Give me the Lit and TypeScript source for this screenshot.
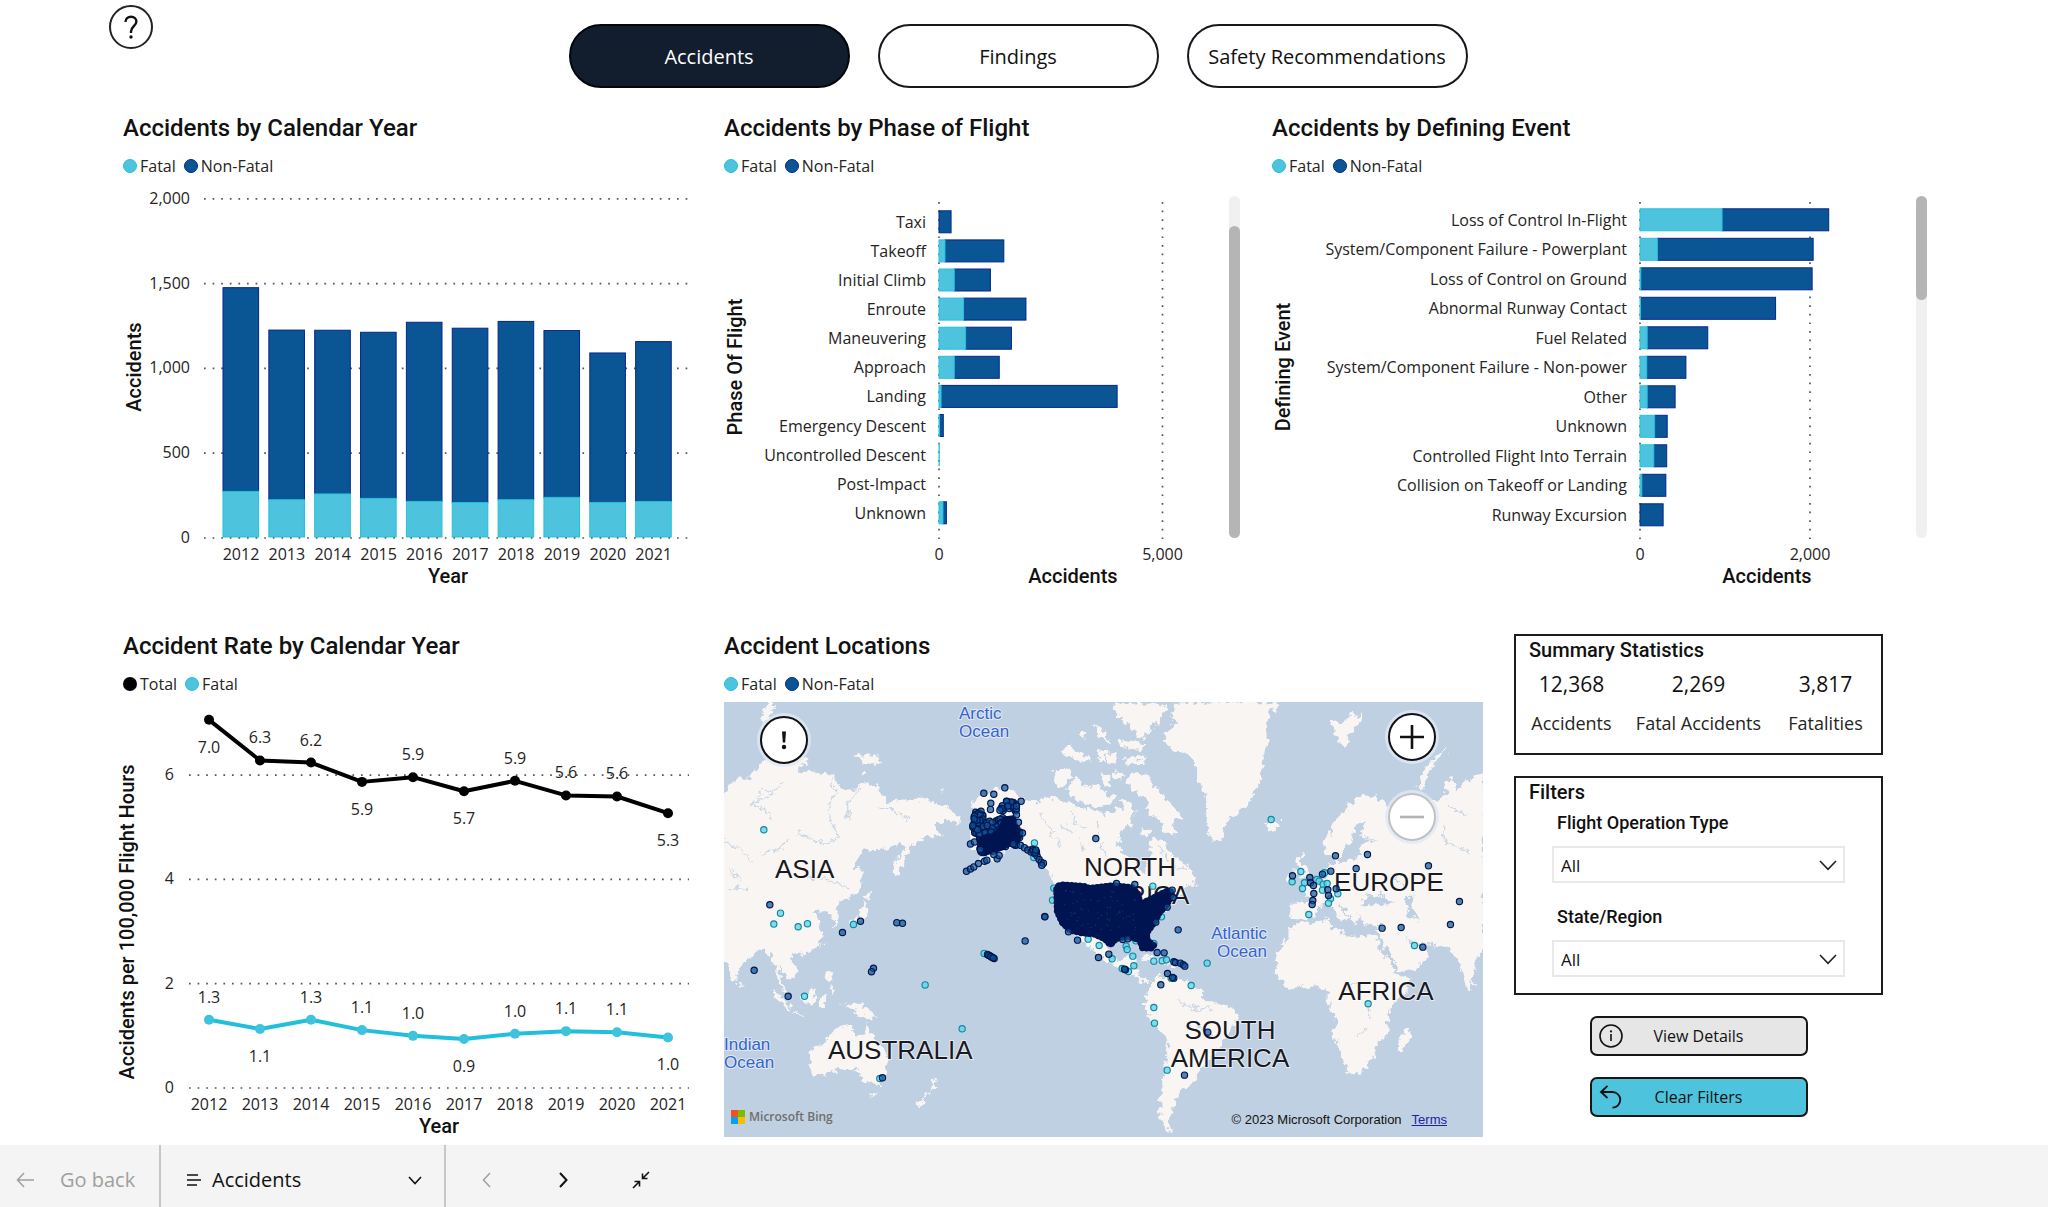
import { LitElement, html, svg, css } from "lit";
import { customElement, property, state } from "lit/decorators.js";
import { classMap } from "lit/directives/class-map.js";

const YEARS = [2012, 2013, 2014, 2015, 2016, 2017, 2018, 2019, 2020, 2021];

const chartStyles = css`
  :host {
    display: block;
  }
  svg {
    display: block;
    width: 100%;
    height: auto;
    overflow: visible;
  }
  .tick {
    font: 16px "Open Sans", "Noto Sans", sans-serif;
    fill: #252423;
  }
  .axis {
    font: 500 20px Roboto, sans-serif;
    fill: #111;
  }
  .end {
    text-anchor: end;
  }
  .mid {
    text-anchor: middle;
  }
  .grid {
    stroke: #555;
    stroke-width: 1.7;
    stroke-dasharray: 1.7 6.9;
  }
  .fatal {
    fill: #4dc3de;
    stroke: #22c1dc;
    stroke-width: 1;
  }
  .nonfatal {
    fill: #0a5694;
    stroke: #04258f;
    stroke-width: 1;
  }
`;

/* ---------- Stacked columns ---------- */

@customElement("column-chart")
export class ColumnChart extends LitElement {
  static styles = chartStyles;

  private totals = [1476, 1226, 1225, 1213, 1272, 1237, 1277, 1223, 1091, 1158];
  private fatals = [275, 226, 260, 234, 216, 209, 226, 240, 210, 215];

  render() {
    const y = (v: number) => 354 - v * 0.1696;
    const x = (i: number) => 100 + i * 45.85;
    return html`<svg viewBox="0 0 601 408" role="img" aria-label="Accidents by calendar year">
      ${[2000, 1500, 1000, 500].map(
        (t) => svg`<line class="grid" x1="81" x2="565" y1=${y(t)} y2=${y(t)} />`
      )}
      ${[2000, 1500, 1000, 500, 0].map(
        (t) => svg`<text class="tick end" x="67" y=${y(t) + 5}>${t.toLocaleString("en-US")}</text>`
      )}
      ${YEARS.map(
        (year, i) => svg`
          <rect class="nonfatal" x=${x(i)} width="35.6" y=${y(this.totals[i])}
            height=${y(this.fatals[i]) - y(this.totals[i])} />
          <rect class="fatal" x=${x(i)} width="35.6" y=${y(this.fatals[i])}
            height=${y(0) - y(this.fatals[i]) - 1} />
          <text class="tick mid" x=${x(i) + 18} y="376">${year}</text>`
      )}
      <line class="grid" x1="81" x2="565" y1=${y(0)} y2=${y(0)} />
      <text class="axis mid" x="325" y="399">Year</text>
      <text class="axis mid" transform="translate(18 183) rotate(-90)">Accidents</text>
    </svg>`;
  }
}

/* ---------- Stacked horizontal bars ---------- */

interface Bar {
  label: string;
  fatal: number;
  total: number;
}

interface BarLayout {
  width: number;
  zero: number;
  scale: number;
  max: number;
  top: number;
  pitch: number;
  titleX: number;
  barX: number;
  thumbTop: number;
  thumbHeight: number;
}

@customElement("bar-chart")
export class BarChart extends LitElement {
  static styles = [
    chartStyles,
    css`
      .track {
        fill: #f0f0f0;
      }
      .thumb {
        fill: #b5b5b5;
      }
    `,
  ];

  @property({ attribute: false }) bars: Bar[] = [];
  @property({ attribute: false }) layout!: BarLayout;
  @property() heading = "";

  render() {
    const l = this.layout;
    const x = (v: number) => l.zero + v * l.scale;
    return html`<svg viewBox="0 0 ${l.width} 408" role="img" aria-label=${this.heading}>
      ${[0, l.max].map(
        (t) => svg`
          <line class="grid" x1=${x(t)} x2=${x(t)} y1="18" y2="355" />
          <text class="tick mid" x=${x(t)} y="376">${t.toLocaleString("en-US")}</text>`
      )}
      ${this.bars.map((b, i) => {
        const y = l.top + i * l.pitch;
        return svg`
          <text class="tick end" x=${l.zero - 13} y=${y + 17}>${b.label}</text>
          ${b.total > b.fatal
            ? svg`<rect class="nonfatal" x=${x(b.fatal)} y=${y} height="22" width=${x(b.total) - x(b.fatal)} />`
            : ""}
          ${b.fatal > 0
            ? svg`<rect class="fatal" x=${x(0)} y=${y} height="22" width=${x(b.fatal) - x(0)} />`
            : ""}`;
      })}
      <text class="axis mid" x=${l.titleX} y="399">Accidents</text>
      <text class="axis mid" transform="translate(18 183) rotate(-90)">${this.heading}</text>
      <rect class="track" x=${l.barX} y="12" width="11" height="342" rx="5.5" />
      <rect class="thumb" x=${l.barX} y=${l.thumbTop} width="11" height=${l.thumbHeight} rx="5.5" />
    </svg>`;
  }
}

/* ---------- Rate lines ---------- */

@customElement("rate-chart")
export class RateChart extends LitElement {
  static styles = [
    chartStyles,
    css`
      polyline {
        fill: none;
        stroke-width: 4;
        stroke-linejoin: round;
      }
      .total-line {
        stroke: #000;
      }
      .fatal-line {
        stroke: #22bfdc;
      }
      .fatal-dot {
        fill: #3dc3de;
      }
    `,
  ];

  private total = [7.06, 6.28, 6.24, 5.87, 5.96, 5.69, 5.89, 5.61, 5.59, 5.27];
  private totalText = ["7.0", "6.3", "6.2", "5.9", "5.9", "5.7", "5.9", "5.6", "5.6", "5.3"];
  private totalBelow = [0, 3, 5, 9];
  private fatal = [1.31, 1.13, 1.31, 1.11, 1.0, 0.94, 1.04, 1.09, 1.07, 0.97];
  private fatalText = ["1.3", "1.1", "1.3", "1.1", "1.0", "0.9", "1.0", "1.1", "1.1", "1.0"];
  private fatalBelow = [1, 5, 9];

  render() {
    const y = (v: number) => 386 - v * 52.15;
    const x = (i: number) => 86 + i * 51;
    const line = (vals: number[]) => vals.map((v, i) => `${x(i)},${y(v)}`).join(" ");
    const labels = (vals: number[], text: string[], below: number[]) =>
      vals.map(
        (v, i) =>
          svg`<text class="tick mid" x=${x(i)} y=${y(v) + (below.includes(i) ? 33 : -17)}>${text[i]}</text>`
      );
    return html`<svg viewBox="0 0 601 435" role="img" aria-label="Accident rate by calendar year">
      ${[6, 4, 2, 0].map(
        (t) => svg`
          <line class="grid" x1="66" x2="566" y1=${y(t)} y2=${y(t)} />
          <text class="tick end" x="51" y=${y(t) + 5}>${t}</text>`
      )}
      <polyline class="total-line" points=${line(this.total)} />
      ${this.total.map((v, i) => svg`<circle cx=${x(i)} cy=${y(v)} r="5" />`)}
      <polyline class="fatal-line" points=${line(this.fatal)} />
      ${this.fatal.map((v, i) => svg`<circle class="fatal-dot" cx=${x(i)} cy=${y(v)} r="5" />`)}
      ${labels(this.total, this.totalText, this.totalBelow)}
      ${labels(this.fatal, this.fatalText, this.fatalBelow)}
      ${YEARS.map((year, i) => svg`<text class="tick mid" x=${x(i)} y="408">${year}</text>`)}
      <text class="axis mid" x="316" y="431">Year</text>
      <text class="axis mid" transform="translate(11 220) rotate(-90)">Accidents per 100,000 Flight Hours</text>
    </svg>`;
  }
}

/* ---------- Map ---------- */

type Pt = [number, number];

/* Each tile keeps its own drawing grid, three units to a map pixel. */
const WEST = "translate(-3.5 -82.5) scale(0.3333 0.338)";
const EAST = "translate(376.5 -12.5) scale(0.3333)";
const NORTH = "translate(296.5 -2.5) scale(0.3333)";
const CARIB = "translate(316.5 167.5) scale(0.3333)";

const WEST_LAND = [
  "M0 520L30 490L60 470L90 465L110 435L130 415L165 405L200 398L250 400L262 420L230 440L240 455L280 450L320 455L345 470L365 500L400 505L425 480L450 485L480 505L500 540L540 535L570 530L610 530L650 545L680 555L720 585L715 605L690 590L665 600L640 610L660 635L620 640L600 655L575 665L562 690L550 720L535 750L520 760L520 735L530 710L555 680L545 658L500 678L430 680L410 710L395 740L418 735L425 760L420 790L385 825L360 835L350 850L355 875L345 895L328 875L310 860L288 862L275 870L305 885L296 905L308 935L295 965L265 985L240 990L225 985L213 1000L232 1035L225 1055L205 1065L190 1040L175 1030L180 1070L200 1108L185 1100L172 1070L165 1030L150 1000L130 970L105 985L75 1010L55 1035L45 1080L35 1070L20 1020L0 1005Z",
  "M153 1095L175 1105L212 1150L208 1162L182 1138Z",
  "M215 1163L255 1167L250 1172L218 1170Z",
  "M238 1110L262 1108L275 1085L288 1105L276 1142L248 1140Z",
  "M298 1115L325 1110L310 1125L318 1150L302 1150Z",
  "M318 1042L334 1048L330 1072L320 1062ZM330 1085L345 1095L335 1108Z",
  "M365 1140L402 1136L440 1148L472 1182L440 1176L408 1172L395 1152Z",
  "M428 818L455 802L446 828ZM434 832L442 868L425 895L388 900L418 868Z",
  "M336 890L352 900L343 912ZM302 955L309 958L303 972ZM55 1070L66 1078L60 1088Z",
  "M262 1280L275 1265L310 1255L330 1230L355 1208L375 1198L398 1205L398 1222L425 1236L437 1192L450 1215L460 1240L485 1258L502 1300L496 1340L475 1374L450 1372L425 1360L415 1338L385 1325L340 1335L312 1347L275 1348Z",
  "M452 1398L470 1400L460 1414Z",
  "M638 1365L652 1380L634 1396ZM628 1400L606 1435L590 1442L588 1430Z",
  "M135 250L160 250L160 270L145 290L128 320L122 300Z",
  "M404 405L435 400L470 405L486 425L440 428ZM658 508L676 498L672 512ZM425 450L440 455L430 462Z",
  "M745 550L790 518L853 495L910 530L960 540L1000 528L1100 560L1100 800L1000 780L975 730L930 680L880 662L830 708L790 722L738 752L745 740L790 695L750 670L748 630L760 600L775 570Z",
];

const NORTH_LAND = [
  "M-20 320L30 320L70 292L110 300L150 315L210 330L255 345L290 322L330 340L335 375L300 400L287 440L310 465L345 485L368 520L385 490L388 430L405 408L440 440L460 470L490 490L520 520L528 550L500 556L480 590L440 620L420 660L130 660L98 560L100 535L70 500L40 450L-20 400Z",
  "M103 212L140 205L158 232L125 262L100 250Z",
  "M165 235L205 262L240 262L260 290L290 290L270 318L215 320L165 300L140 270Z",
  "M330 222L385 222L395 255L430 290L465 325L485 350L455 370L465 408L430 395L410 350L385 345L380 300L345 280L320 250Z",
  "M280 12L410 12L440 22L410 65L380 110L350 120L345 90L310 70L285 40Z",
  "M300 120L340 125L375 135L360 150L310 150ZM310 175L375 172L375 195L320 195Z",
  "M120 155L150 130L160 150L190 165L215 190L170 185L150 170ZM215 75L250 85L265 130L235 110ZM170 105L200 95L190 125Z",
  "M225 155L260 150L255 180L235 178ZM260 165L290 160L285 195L265 190ZM240 215L270 225L268 265L245 250ZM280 215L308 220L300 250L282 240Z",
  "M300 300L335 310L345 345L315 340ZM360 385L395 395L380 408L360 402Z",
  "M500 8L775 8L745 50L735 90L745 130L728 190L722 240L690 302L650 345L615 365L607 415L590 424L568 415L555 370L562 300L528 240L522 190L492 160L450 155L428 105L470 75L450 40L475 8Z",
  "M733 375L775 365L778 380L748 394Z",
];

const CARIB_LAND = [
  "M100 190L140 230L172 258L215 283L250 308L285 320L302 342L330 338L325 330L300 325L292 300L280 290L283 262L260 258L242 276L215 265L205 235L215 200Z",
  "M300 262L335 262L370 272L365 280L310 270ZM378 280L410 282L405 292L380 288Z",
];

const EAST_LAND = [
  "M165 865L150 890L140 920L133 950L150 990L185 1030L200 1052L200 1110L190 1170L180 1230L180 1290L195 1322L216 1332L202 1308L212 1280L222 1240L240 1205L272 1190L280 1165L310 1130L350 1080L380 1035L412 985L405 962L350 940L315 930L298 900L270 880L230 868L215 858L190 862Z",
  "M570 715L620 700L685 690L690 712L740 738L800 740L825 742L850 790L885 848L930 868L920 905L870 950L862 1000L870 1030L835 1060L822 1100L790 1145L745 1153L725 1110L700 1040L710 990L685 950L680 905L640 885L570 900L530 860L523 820L535 780L570 735Z",
  "M925 1012L932 1040L905 1088L892 1080L895 1045Z",
  "M668 465L700 400L740 350L790 316L840 330L865 350L860 375L890 380L940 350L1000 335L1040 318L1035 285L1055 262L1070 300L1100 270L1150 246L1150 780L1125 820L1105 905L1090 880L1075 810L1050 782L1000 766L968 770L985 800L950 835L895 850L870 800L840 745L830 722L850 705L800 708L780 690L770 672L775 700L755 700L735 660L705 640L745 685L725 695L690 645L655 650L640 675L620 692L570 688L570 640L622 640L625 622L600 602L640 580L680 555L688 520L700 530L710 500L690 495L675 500Z",
  "M598 488L606 490L604 520L628 562L598 572L602 545L588 520ZM562 548L588 540L585 568L562 572Z",
  "M688 90L740 100L735 80L785 72L788 92L765 108L730 172L710 150Z",
  "M1045 178L1015 205L990 235L968 300L955 298L965 255L990 215L1035 178Z",
  "M1112 870L1124 885L1116 892Z",
];

const EAST_WATER = [
  "M738 470L762 440L765 405L790 395L782 445L825 450L785 462L775 500L755 515L715 520L725 490Z",
  "M782 642L800 615L830 625L842 612L880 640L830 652Z",
  "M908 620L942 618L935 650L958 690L925 682L920 650Z",
  "M915 740L945 765L985 768L965 782L935 765Z",
  "M868 380L900 385L895 412L865 395Z",
];

const WEST_RIVERS =
  "M110 540L125 500L150 510M330 470L345 510L325 560L330 600L360 640L310 665L270 650L230 630M10 655L60 680L90 720M420 500L380 540L385 590M470 560L520 560L560 590M120 690L180 680L200 650M190 480L150 520L95 545L130 560L155 585M20 800L80 795M30 740L60 770M260 760L320 770L390 795";
const EAST_RIVERS =
  "M1030 410L1030 450L1060 470L1110 490M840 790L835 760M800 960L815 985M770 1040L800 1020M880 560L920 600M740 900L780 880M340 1040L300 1010L260 1020M230 930L280 960L330 955M1040 345L1100 380";
const NORTH_RIVERS =
  "M150 330L165 370L200 390M180 420L190 460M230 360L235 400M120 380L170 400M240 430L260 470M60 340L90 390L120 440M430 470L460 500L500 510M410 440L430 460";

const WEST_FATAL: Pt[] = [[130, 622], [180, 869], [160, 901], [233, 909], [261, 900], [399, 902], [252, 1115], [614, 1081], [725, 1211], [942, 661], [940, 704], [791, 988], [478, 1358]];
const WEST_NON: Pt[] = [[148, 844], [101, 1038], [203, 1115], [366, 926], [420, 893], [529, 897], [546, 899], [459, 1032], [453, 1042], [914, 951], [973, 879], [1126, 648], [801, 991], [808, 995], [814, 999], [821, 1003], [804, 993], [811, 997], [818, 1001], [486, 1356],
  [853, 498], [790, 514], [820, 517], [811, 544], [810, 562], [902, 538], [888, 552], [872, 540], [858, 538], [888, 578], [862, 552], [761, 590], [757, 610], [750, 664], [762, 658], [738, 745], [750, 738], [760, 732], [774, 722], [792, 715], [799, 712], [894, 600], [906, 632], [900, 668], [912, 675], [922, 682], [932, 688], [942, 692], [950, 700], [956, 710], [962, 718], [969, 721], [964, 727], [948, 688], [936, 680], [938, 684], [944, 690], [946, 682], [878, 664], [830, 708], [836, 698], [820, 695], [780, 680]];
const CARIB_FATAL: Pt[] = [[40, 56], [36, 92], [337, 50], [363, 142], [143, 209], [176, 228], [215, 268], [257, 230], [260, 240], [286, 214], [277, 260], [280, 289], [245, 297], [264, 306], [340, 275], [365, 274], [378, 271], [340, 222], [392, 326], [500, 281], [452, 348], [340, 414], [342, 461]];
const CARIB_NON: Pt[] = [[13, 142], [84, 187], [111, 212], [174, 264], [205, 254], [228, 42], [283, 45], [413, 181], [255, 301], [252, 299], [350, 249], [371, 250], [400, 277], [405, 279], [420, 281], [428, 286], [433, 290], [381, 312], [400, 326], [396, 324], [361, 346], [502, 488], [395, 62], [398, 84], [380, 113], [346, 158], [247, 210], [262, 208]];
const EAST_FATAL: Pt[] = [[512, 390], [601, 546], [575, 577], [612, 580], [606, 597], [649, 570], [656, 575], [668, 584], [680, 582], [666, 602], [712, 613], [690, 628], [684, 641], [625, 675], [942, 768], [803, 943], [200, 1142], [672, 550]];
const EAST_NON: Pt[] = [[705, 499], [801, 495], [767, 537], [984, 529], [691, 545], [666, 554], [576, 559], [628, 564], [630, 580], [639, 588], [640, 612], [637, 633], [635, 645], [682, 601], [684, 618], [707, 598], [1077, 636], [1050, 705], [845, 716], [902, 714], [967, 773], [252, 1157]];

const US_SHAPE =
  "M48 60Q50 48 62 46L130 50L148 56L220 48L275 54L292 72L300 104L340 84L375 66L392 66L394 80L376 110L358 128L342 158L318 192L322 214L340 228L334 236L306 236L298 212L262 200L226 208L210 226L192 208L160 194L120 190L88 182L64 158L50 126Z";

const ALASKA_CORE =
  "M852 590L880 586L886 615L898 640L892 656L868 662L846 676L822 684L800 690L786 676L778 655L800 640L815 640L838 625L845 608Z";

function random(seed: number) {
  return () => {
    seed = (seed * 16807) % 2147483647;
    return seed / 2147483647;
  };
}

function alaska(): Pt[] {
  const rnd = random(77);
  const clusters = [
    [850, 630, 46, 44, 90], [790, 670, 18, 20, 26], [815, 655, 45, 32, 50],
    [775, 585, 16, 20, 18], [770, 615, 16, 26, 18], [865, 556, 30, 18, 18], [800, 618, 40, 26, 18], [890, 640, 16, 30, 20],
  ];
  const out: Pt[] = [];
  for (const [cx, cy, rx, ry, n] of clusters) {
    for (let i = 0; i < n; i++) {
      const a = rnd() * Math.PI * 2;
      const r = Math.sqrt(rnd());
      out.push([cx + Math.cos(a) * rx * r, cy + Math.sin(a) * ry * r]);
    }
  }
  return out;
}

function specks(): Pt[] {
  const rnd = random(991);
  return Array.from({ length: 60 }, () => [70 + rnd() * 220, 62 + rnd() * 120] as Pt);
}

@customElement("accident-map")
export class AccidentMap extends LitElement {
  static styles = css`
    :host {
      display: block;
      position: relative;
    }
    .world {
      display: block;
      width: 100%;
      height: auto;
      background: #bfd0e2;
    }
    .land {
      fill: #f8f5f2;
    }
    .water {
      fill: #bfd0e2;
    }
    .river {
      fill: none;
      stroke: #c8d6e5;
      stroke-width: 4;
    }
    .non {
      fill: #0a5694;
      fill-opacity: 0.7;
      stroke: #001450;
      stroke-width: 3.4;
    }
    .fat {
      fill: #63d6e8;
      fill-opacity: 0.8;
      stroke: #1087a2;
      stroke-width: 3.4;
    }
    .mass {
      fill: #001452;
      stroke: #001452;
      stroke-width: 20;
      stroke-linecap: round;
      stroke-dasharray: 0.1 13;
    }
    .mass-core {
      fill: #001452;
      stroke: #001452;
      stroke-width: 14;
      stroke-linejoin: round;
    }
    .speck {
      fill: #0b3a7c;
    }
    .continent {
      font: 26px "Liberation Sans", Arial, sans-serif;
      fill: #191922;
      stroke: #ffffff;
      stroke-opacity: 0.6;
      stroke-width: 2;
      paint-order: stroke;
    }
    .ocean {
      font: 17px "Liberation Sans", Arial, sans-serif;
      fill: #3463cc;
      stroke: #dfe8f3;
      stroke-width: 2;
      paint-order: stroke;
    }
    .mid {
      text-anchor: middle;
    }
    .end {
      text-anchor: end;
    }
    .round {
      position: absolute;
      display: grid;
      place-items: center;
      width: 48px;
      height: 48px;
      padding: 0;
      border: 2px solid #111;
      border-radius: 50%;
      background: #fff;
      box-shadow: 0 0 0 3px rgba(222, 233, 246, 0.8);
      color: #111;
    }
    .round.notice {
      top: 14px;
      left: 36px;
    }
    .round.zoom-in {
      top: 11px;
      right: 47px;
    }
    .round.zoom-out {
      top: 91px;
      right: 47px;
      border-color: #c1c1c1;
      color: #b3b3b3;
    }
    .bing {
      position: absolute;
      left: 7px;
      bottom: 11px;
      display: flex;
      align-items: center;
      gap: 4px;
      font: 600 12px/18px "Open Sans", sans-serif;
      color: #706e6c;
    }
    .credit {
      position: absolute;
      right: 36px;
      bottom: 8px;
      display: flex;
      gap: 10px;
      font: 13px/18px "Liberation Sans", Arial, sans-serif;
      color: #111;
    }
    .credit a {
      color: #1c22a4;
    }
  `;

  private dots(points: Pt[], cls: string) {
    return points.map(([x, y]) => svg`<circle class=${cls} cx=${x} cy=${y} r="9.4" />`);
  }

  private land(paths: string[], tile: string) {
    return svg`<g transform=${tile}>${paths.map((d) => svg`<path class="land" d=${d} />`)}</g>`;
  }

  render() {
    return html`
      <svg class="world" viewBox="0 0 759 435" role="img" aria-label="World map of accident locations">
        <defs>
          <filter id="coast" x="0" y="0" width="100%" height="100%">
            <feTurbulence type="fractalNoise" baseFrequency="0.16" numOctaves="3" seed="4" />
            <feDisplacementMap in="SourceGraphic" scale="11" xChannelSelector="R" yChannelSelector="G" />
          </filter>
        </defs>
        <g filter="url(#coast)">
          <rect class="water" width="759" height="435" />
          ${this.land(WEST_LAND, WEST)} ${this.land(NORTH_LAND, NORTH)}
          ${this.land(CARIB_LAND, CARIB)} ${this.land(EAST_LAND, EAST)}
          <g transform=${EAST}>${EAST_WATER.map((d) => svg`<path class="water" d=${d} />`)}
            <path class="river" d=${EAST_RIVERS} /></g>
          <g transform=${WEST}><path class="river" d=${WEST_RIVERS} /></g>
          <g transform=${NORTH}><path class="river" d=${NORTH_RIVERS} /></g>
        </g>
        <text class="ocean" x="235" y="17">Arctic</text>
        <text class="ocean" x="235" y="35">Ocean</text>
        <text class="ocean" x="0" y="348">Indian</text>
        <text class="ocean" x="0" y="366">Ocean</text>
        <text class="ocean end" x="543" y="237">Atlantic</text>
        <text class="ocean end" x="543" y="255">Ocean</text>
        <text class="continent" x="51" y="176">ASIA</text>
        <text class="continent" x="104" y="357">AUSTRALIA</text>
        <text class="continent mid" x="406" y="174">NORTH</text>
        <text class="continent mid" x="406" y="202">AMERICA</text>
        <text class="continent mid" x="665" y="189">EUROPE</text>
        <text class="continent mid" x="662" y="298">AFRICA</text>
        <text class="continent mid" x="506" y="337">SOUTH</text>
        <text class="continent mid" x="506" y="365">AMERICA</text>
        <g transform=${WEST}>
          ${this.dots(WEST_FATAL, "fat")} ${this.dots(alaska(), "non")}
          <path class="mass-core" d=${ALASKA_CORE} />
          ${this.dots(WEST_NON, "non")}
        </g>
        <g transform=${CARIB}>
          ${this.dots(CARIB_FATAL, "fat")}
          <path class="mass-core" d=${US_SHAPE} />
          <path class="mass" d=${US_SHAPE} />
          ${specks().map(([x, y]) => svg`<circle class="speck" cx=${x} cy=${y} r="2" />`)}
          ${this.dots(CARIB_NON, "non")}
        </g>
        <g transform=${EAST}>${this.dots(EAST_FATAL, "fat")} ${this.dots(EAST_NON, "non")}</g>
      </svg>
      <button class="round notice" aria-label="Notice">
        <svg width="24" height="24" viewBox="0 0 24 24">
          <path d="M10 3.5h4l-.8 11h-2.4z" fill="currentColor" /><circle cx="12" cy="19" r="2.2" fill="currentColor" />
        </svg>
      </button>
      <button class="round zoom-in" aria-label="Zoom in">
        <svg width="26" height="26" viewBox="0 0 26 26">
          <path d="M13 1v24M1 13h24" fill="none" stroke="currentColor" stroke-width="2.6" />
        </svg>
      </button>
      <button class="round zoom-out" aria-label="Zoom out">
        <svg width="26" height="26" viewBox="0 0 26 26">
          <path d="M1 13h24" fill="none" stroke="currentColor" stroke-width="2.6" />
        </svg>
      </button>
      <span class="bing">
        <svg width="14" height="14" viewBox="0 0 14 14">
          <path fill="#f25022" d="M0 0h7v7H0z" /><path fill="#7fba00" d="M7 0h7v7H7z" />
          <path fill="#00a4ef" d="M0 7h7v7H0z" /><path fill="#ffb900" d="M7 7h7v7H7z" />
        </svg>
        Microsoft Bing
      </span>
      <span class="credit">© 2023 Microsoft Corporation <a href="#terms">Terms</a></span>
    `;
  }
}

/* ---------- Page ---------- */

const PHASES: Bar[] = [
  { label: "Taxi", fatal: 0, total: 270 },
  { label: "Takeoff", fatal: 135, total: 1450 },
  { label: "Initial Climb", fatal: 342, total: 1150 },
  { label: "Enroute", fatal: 550, total: 1945 },
  { label: "Maneuvering", fatal: 597, total: 1620 },
  { label: "Approach", fatal: 342, total: 1348 },
  { label: "Landing", fatal: 47, total: 3985 },
  { label: "Emergency Descent", fatal: 12, total: 96 },
  { label: "Uncontrolled Descent", fatal: 6, total: 6 },
  { label: "Post-Impact", fatal: 0, total: 0 },
  { label: "Unknown", fatal: 90, total: 165 },
];

const EVENTS: Bar[] = [
  { label: "Loss of Control In-Flight", fatal: 966, total: 2220 },
  { label: "System/Component Failure - Powerplant", fatal: 205, total: 2037 },
  { label: "Loss of Control on Ground", fatal: 10, total: 2025 },
  { label: "Abnormal Runway Contact", fatal: 6, total: 1595 },
  { label: "Fuel Related", fatal: 85, total: 797 },
  { label: "System/Component Failure - Non-power", fatal: 80, total: 540 },
  { label: "Other", fatal: 85, total: 413 },
  { label: "Unknown", fatal: 173, total: 320 },
  { label: "Controlled Flight Into Terrain", fatal: 163, total: 314 },
  { label: "Collision on Takeoff or Landing", fatal: 22, total: 304 },
  { label: "Runway Excursion", fatal: 0, total: 272 },
];

const PHASE_LAYOUT: BarLayout = {
  width: 548, zero: 215, scale: 0.0447, max: 5000, top: 26.8, pitch: 29.1,
  titleX: 349, barX: 505, thumbTop: 42, thumbHeight: 312,
};

const EVENT_LAYOUT: BarLayout = {
  width: 656, zero: 368, scale: 0.085, max: 2000, top: 24.8, pitch: 29.5,
  titleX: 495, barX: 644, thumbTop: 12, thumbHeight: 104,
};

@customElement("app-root")
export class AppRoot extends LitElement {
  static styles = css`
    :host {
      display: flex;
      flex-direction: column;
      min-height: 100vh;
      background: #fff;
      color: #111;
      font: 16px/24px "Open Sans", "Noto Sans", sans-serif;
    }
    * {
      box-sizing: border-box;
    }
    button,
    select {
      font: inherit;
      color: inherit;
      margin: 0;
    }
    button {
      cursor: pointer;
    }
    .top {
      display: grid;
      grid-template-columns: 1fr auto 1fr;
      align-items: start;
      padding: 5px 121px 26px 109px;
    }
    .help {
      display: grid;
      place-items: center;
      width: 44px;
      height: 44px;
      padding: 0;
      border: 2px solid #222;
      border-radius: 50%;
      background: #fff;
    }
    .tabs {
      display: flex;
      gap: 28px;
      margin-top: 19px;
    }
    .tab {
      width: 281px;
      height: 64px;
      padding: 2px 0 0;
      border: 2px solid #16181f;
      border-radius: 32px;
      background: #fff;
      font-size: 20px;
    }
    .tab.active {
      background: #121d2d;
      border-color: #03060c;
      color: #fff;
    }
    .row {
      display: grid;
      padding: 0 120px 0 123px;
    }
    .row.upper {
      grid-template-columns: 601fr 548fr 656fr;
      margin-bottom: 40px;
    }
    .row.lower {
      grid-template-columns: 601fr 759fr 31fr 369fr 45fr;
      align-items: start;
    }
    h2 {
      margin: 0;
      font: 500 24px/28px Roboto, sans-serif;
    }
    .legend {
      display: flex;
      gap: 8px;
      margin: 12px 0 6px;
      padding: 0;
      list-style: none;
      color: #252423;
    }
    .legend li {
      display: flex;
      align-items: center;
      gap: 3px;
    }
    .dot {
      width: 14px;
      height: 14px;
      border-radius: 50%;
    }
    .dot.fatal {
      background: #4dc3de;
      border: 1px solid #22c1dc;
    }
    .dot.nonfatal {
      background: #0a5694;
      border: 1px solid #04258f;
    }
    .dot.total {
      background: #000;
    }
    .side {
      grid-column: 4;
      display: flex;
      flex-direction: column;
      gap: 21px;
      padding-top: 2px;
    }
    .box {
      border: 2px solid #1c1c1c;
      padding: 0 13px;
    }
    .box h3 {
      margin: 0;
      font: 500 20px/28px Roboto, sans-serif;
    }
    .stats {
      display: grid;
      grid-template-columns: 1fr auto 1fr;
      gap: 0 22px;
      margin: 0;
      padding-bottom: 10px;
      text-align: center;
    }
    .stats div {
      display: flex;
      flex-direction: column-reverse;
    }
    .stats dt {
      font-size: 18px;
      line-height: 39px;
      color: #252423;
    }
    .stats dd {
      margin: 0;
      font-size: 21px;
      line-height: 40px;
    }
    .field {
      display: flex;
      flex-direction: column;
      padding: 3px 23px 0;
    }
    .field + .field {
      padding-top: 20px;
    }
    .field label {
      padding: 0 5px;
      font: 500 18px/28px Roboto, sans-serif;
    }
    .filters {
      padding-bottom: 16px;
    }
    .select {
      position: relative;
      margin-top: 9px;
    }
    .select select {
      display: block;
      width: 100%;
      height: 37px;
      padding: 2px 36px 0 7px;
      border: 2px solid #e9e9e9;
      border-radius: 0;
      background: #fff;
      appearance: none;
      font-size: 17px;
    }
    .select svg {
      position: absolute;
      right: 8px;
      top: 14px;
      pointer-events: none;
    }
    .actions {
      display: flex;
      flex-direction: column;
      align-items: center;
      gap: 21px;
    }
    .action {
      display: grid;
      grid-template-columns: 24px 1fr 24px;
      align-items: center;
      width: 218px;
      height: 40px;
      padding: 0 7px;
      border: 2px solid #161616;
      border-radius: 7px;
      background: #e6e6e6;
    }
    .action.clear {
      background: #4dc3de;
    }
    .bar {
      display: flex;
      align-items: stretch;
      height: 62px;
      margin-top: auto;
      background: #f4f4f4;
      font-size: 20px;
    }
    .bar button {
      display: flex;
      align-items: center;
      padding-top: 8px;
      padding-bottom: 0;
      border: 0;
      background: none;
    }
    .bar .back {
      gap: 26px;
      width: 161px;
      padding-left: 16px;
      border-right: 2px solid #c9c7c5;
      color: #a19f9d;
    }
    .bar .pages {
      gap: 10px;
      width: 285px;
      padding-left: 25px;
      padding-right: 22px;
      border-right: 2px solid #c9c7c5;
    }
    .bar .pages .name {
      flex: 1;
      text-align: left;
    }
    .bar .icon {
      justify-content: center;
      width: 77px;
    }
    .bar .icon.off {
      margin-left: 2px;
      color: #a19f9d;
    }
  `;

  @state() private tab = "Accidents";

  private legend(items: [string, string][]) {
    return html`<ul class="legend">
      ${items.map(([cls, text]) => html`<li><span class="dot ${cls}"></span>${text}</li>`)}
    </ul>`;
  }

  private select(id: string, label: string) {
    return html`<div class="field">
      <label for=${id}>${label}</label>
      <div class="select">
        <select id=${id}>
          <option>All</option>
        </select>
        <svg width="18" height="11" viewBox="0 0 18 11">
          <path d="M1 1l8 8.4L17 1" fill="none" stroke="#222" stroke-width="1.6" />
        </svg>
      </div>
    </div>`;
  }

  render() {
    const severity: [string, string][] = [["fatal", "Fatal"], ["nonfatal", "Non-Fatal"]];
    return html`
      <header class="top">
        <button class="help" aria-label="Help">
          <svg width="18" height="26" viewBox="0 0 18 26">
            <path d="M3.500 8C3.500 4.500 5.800 2.800 9 2.800c3.200 0 5.400 1.800 5.400 4.800 0 4.200-5.400 5-5.400 9.800v1.600"
              fill="none" stroke="#111" stroke-width="2.4" />
            <circle cx="9" cy="23" r="1.7" fill="#111" />
          </svg>
        </button>
        <nav class="tabs">
          ${["Accidents", "Findings", "Safety Recommendations"].map(
            (name) => html`<button
              class=${classMap({ tab: true, active: this.tab === name })}
              @click=${() => (this.tab = name)}
            >${name}</button>`
          )}
        </nav>
      </header>

      <div class="row upper">
        <section>
          <h2>Accidents by Calendar Year</h2>
          ${this.legend(severity)}
          <column-chart></column-chart>
        </section>
        <section>
          <h2>Accidents by Phase of Flight</h2>
          ${this.legend(severity)}
          <bar-chart heading="Phase Of Flight" .bars=${PHASES} .layout=${PHASE_LAYOUT}></bar-chart>
        </section>
        <section>
          <h2>Accidents by Defining Event</h2>
          ${this.legend(severity)}
          <bar-chart heading="Defining Event" .bars=${EVENTS} .layout=${EVENT_LAYOUT}></bar-chart>
        </section>
      </div>

      <div class="row lower">
        <section>
          <h2>Accident Rate by Calendar Year</h2>
          ${this.legend([["total", "Total"], ["fatal", "Fatal"]])}
          <rate-chart></rate-chart>
        </section>
        <section>
          <h2>Accident Locations</h2>
          ${this.legend(severity)}
          <accident-map></accident-map>
        </section>
        <aside class="side">
          <div class="box">
            <h3>Summary Statistics</h3>
            <dl class="stats">
              <div><dt>Accidents</dt><dd>12,368</dd></div>
              <div><dt>Fatal Accidents</dt><dd>2,269</dd></div>
              <div><dt>Fatalities</dt><dd>3,817</dd></div>
            </dl>
          </div>
          <div class="box filters">
            <h3>Filters</h3>
            ${this.select("operation", "Flight Operation Type")}
            ${this.select("region", "State/Region")}
          </div>
          <div class="actions">
            <button class="action">
              <svg width="24" height="24" viewBox="0 0 24 24">
                <circle cx="12" cy="12" r="11" fill="none" stroke="#111" stroke-width="1.6" />
                <path d="M12 10v7" stroke="#111" stroke-width="1.6" />
                <circle cx="12" cy="7.4" r="1.1" fill="#111" />
              </svg>
              <span>View Details</span>
            </button>
            <button class="action clear">
              <svg width="24" height="24" viewBox="0 0 24 24">
                <path d="M8.5 .8L2 7l6.5 6M2 7h11.5a7.8 7.8 0 0 1 0 15.6"
                  fill="none" stroke="#111" stroke-width="1.8" />
              </svg>
              <span>Clear Filters</span>
            </button>
          </div>
        </aside>
      </div>

      <footer class="bar">
        <button class="back" disabled>
          <svg width="18" height="16" viewBox="0 0 18 16">
            <path d="M8 1L1.5 8L8 15M1.5 8H18" fill="none" stroke="currentColor" stroke-width="1.5" />
          </svg>
          Go back
        </button>
        <button class="pages">
          <svg width="16" height="14" viewBox="0 0 16 14">
            <path d="M1 2h11M1 7h14M1 12h10" stroke="currentColor" stroke-width="1.6" />
          </svg>
          <span class="name">Accidents</span>
          <svg width="14" height="9" viewBox="0 0 14 9">
            <path d="M1 1l6 6.5L13 1" fill="none" stroke="currentColor" stroke-width="1.6" />
          </svg>
        </button>
        <button class="icon off" aria-label="Previous page">
          <svg width="9" height="16" viewBox="0 0 9 16">
            <path d="M8 1L1.5 8L8 15" fill="none" stroke="currentColor" stroke-width="1.5" />
          </svg>
        </button>
        <button class="icon" aria-label="Next page">
          <svg width="9" height="16" viewBox="0 0 9 16">
            <path d="M1 1l6.5 7L1 15" fill="none" stroke="currentColor" stroke-width="2" />
          </svg>
        </button>
        <button class="icon" aria-label="Exit full screen">
          <svg width="18" height="18" viewBox="0 0 18 18">
            <path d="M17 1l-6.5 6.5M10.500 2.500v5h5M1 17l6.500-6.500M2.500 10.500h5v5"
              fill="none" stroke="currentColor" stroke-width="1.6" />
          </svg>
        </button>
      </footer>
    `;
  }
}
